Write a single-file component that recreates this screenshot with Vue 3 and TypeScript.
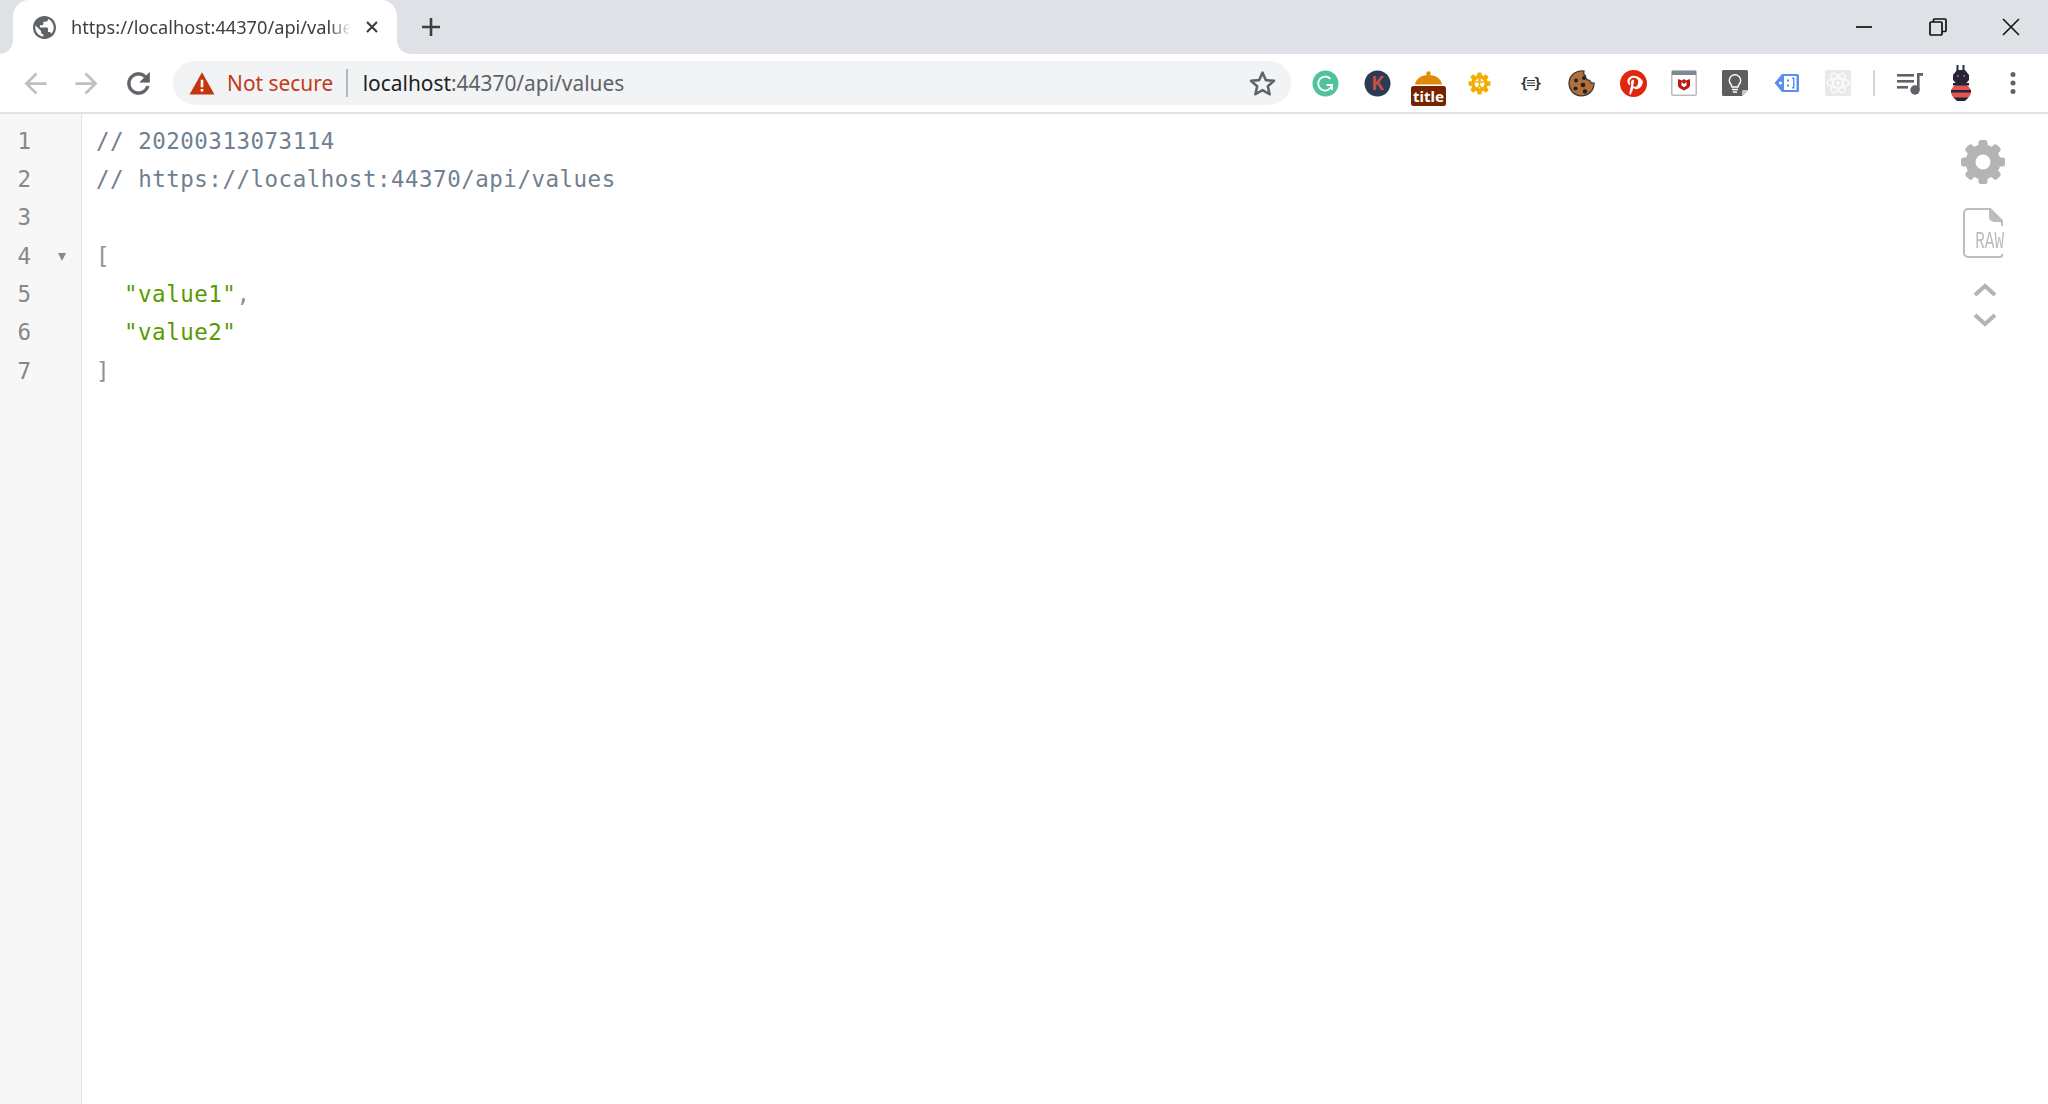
<script setup lang="ts">
const lines: { html: string; cls: string; indent?: boolean }[] = [
  { html: '// 20200313073114', cls: 'comment' },
  { html: '// https://localhost:44370/api/values', cls: 'comment' },
  { html: '', cls: '' },
  { html: '[', cls: 'punct' },
  { html: '"value1"', cls: 'str', indent: true },
  { html: '"value2"', cls: 'str', indent: true },
  { html: ']', cls: 'punct' },
]
const teeth = [0, 45, 90, 135, 180, 225, 270, 315]
</script>

<template>
  <div class="window">
    <header class="tabstrip">
      <div class="tab">
        <svg class="globe" viewBox="2 2 20 20" aria-hidden="true">
          <path fill="#5f6368" d="M12 2C6.48 2 2 6.48 2 12s4.48 10 10 10 10-4.48 10-10S17.52 2 12 2zm-1 17.93c-3.95-.49-7-3.85-7-7.93 0-.62.08-1.21.21-1.79L9 15v1c0 1.1.9 2 2 2v1.93zm6.9-2.54c-.26-.81-1-1.39-1.9-1.39h-1v-3c0-.55-.45-1-1-1H8v-2h2c.55 0 1-.45 1-1V7h2c1.1 0 2-.9 2-2v-.41c2.93 1.19 5 4.06 5 7.41 0 2.08-.8 3.97-2.1 5.39z" />
        </svg>
        <span class="tab-title">https://localhost:44370/api/value</span>
        <svg class="tab-close" viewBox="0 0 14 14" aria-hidden="true">
          <path d="M2 2l10 10M12 2L2 12" stroke="#3c4043" stroke-width="2.2" fill="none" />
        </svg>
      </div>
      <svg class="newtab" viewBox="0 0 20 20" aria-hidden="true">
        <path d="M10 1v18M1 10h18" stroke="#3c4043" stroke-width="2.6" fill="none" />
      </svg>
      <div class="winctl">
        <div class="winbtn">
          <svg width="18" height="18" viewBox="0 0 18 18"><path d="M1 9h16" stroke="#111" stroke-width="1.7" /></svg>
        </div>
        <div class="winbtn">
          <svg width="18" height="18" viewBox="0 0 18 18" fill="none" stroke="#111" stroke-width="1.7">
            <rect x="1" y="4" width="12" height="13" rx="1" />
            <path d="M4.5 4V2a1 1 0 0 1 1-1H16a1 1 0 0 1 1 1v10.5a1 1 0 0 1-1 1h-3" />
          </svg>
        </div>
        <div class="winbtn">
          <svg width="18" height="18" viewBox="0 0 18 18"><path d="M1 1l16 16M17 1L1 17" stroke="#111" stroke-width="1.6" fill="none" /></svg>
        </div>
      </div>
    </header>

    <nav class="toolbar">
      <div class="slot nav">
        <svg class="navicon" viewBox="0 0 24 24"><path fill="#bdc0c4" d="M20 11H7.83l5.59-5.59L12 4l-8 8 8 8 1.41-1.41L7.83 13H20v-2z" /></svg>
      </div>
      <div class="slot nav">
        <svg class="navicon flip" viewBox="0 0 24 24"><path fill="#bdc0c4" d="M20 11H7.83l5.59-5.59L12 4l-8 8 8 8 1.41-1.41L7.83 13H20v-2z" /></svg>
      </div>
      <div class="slot nav">
        <svg class="navicon reload" viewBox="0 0 24 24"><path fill="#5f6368" stroke="#5f6368" stroke-width=".5" d="M17.65 6.35C16.2 4.9 14.21 4 12 4c-4.42 0-7.99 3.58-7.99 8s3.57 8 7.99 8c3.73 0 6.84-2.55 7.73-6h-2.08c-.82 2.33-3.04 4-5.65 4-3.31 0-6-2.69-6-6s2.69-6 6-6c1.66 0 3.14.69 4.22 1.78L13 11h7V4l-2.35 2.35z" /></svg>
      </div>

      <div class="omnibox">
        <svg class="warn" viewBox="0 0 24 22" aria-hidden="true">
          <path d="M12 1L23.5 21.5H.5z" fill="#c5360f" />
          <path d="M10.8 8h2.4v7h-2.4zM10.8 16.5h2.4v2.4h-2.4z" fill="#fff" />
        </svg>
        <span class="insecure">Not secure</span>
        <span class="omni-sep"></span>
        <span class="url"><span class="host">localhost</span>:44370/api/values</span>
        <svg class="star" viewBox="0 0 24 24" aria-hidden="true">
          <path d="M12 3l2.7 6.2 6.8.6-5.1 4.5 1.5 6.6L12 17.5l-5.9 3.4 1.5-6.6-5.1-4.5 6.8-.6z" fill="none" stroke="#5f6368" stroke-width="2.1" stroke-linejoin="round" />
        </svg>
      </div>

      <div class="exts">
        <div class="slot">
          <svg width="27" height="27" viewBox="0 0 27 27">
            <circle cx="13.5" cy="13.5" r="13" fill="#4fc39a" />
            <path d="M18.5 9a7 7 0 1 0 1.5 6h-5.5M20 15v5" fill="none" stroke="#fff" stroke-width="1.8" />
          </svg>
        </div>
        <div class="slot">
          <svg width="27" height="27" viewBox="0 0 27 27">
            <circle cx="13.5" cy="13.5" r="13" fill="#2b3a55" />
            <text x="13.5" y="20" text-anchor="middle" class="k">K</text>
          </svg>
        </div>
        <div class="slot">
          <svg width="37" height="36" viewBox="0 0 37 36" class="title-ic">
            <circle cx="18.5" cy="2.5" r="2.2" fill="#e08a0b" />
            <path d="M5 13.5C6 7 12 4 18.5 4S31 7 32 13.5z" fill="#e08a0b" />
            <rect x="1" y="15" width="35" height="20" rx="2.5" fill="#772200" />
            <text x="18.5" y="30.5" text-anchor="middle" class="title-t">title</text>
          </svg>
        </div>
        <div class="slot">
          <svg width="23" height="23" viewBox="-12 -12 24 24">
            <rect v-for="a in teeth" :key="a" x="-2.3" y="-11.5" width="4.6" height="6" rx="1" fill="#f5ab00" :transform="`rotate(${a})`" />
            <circle r="7" fill="none" stroke="#f5ab00" stroke-width="3.6" />
            <circle cy="-3.6" r="1.5" fill="#f5ab00" />
            <path d="M-4.5-1.5L4.5-1.5M0-1.5V2L-2.4 5.5M0 2L2.4 5.5" stroke="#f5ab00" stroke-width="1.5" fill="none" />
          </svg>
        </div>
        <div class="slot">
          <svg width="22" height="16" viewBox="0 0 22 16">
            <text x="0" y="12.5" class="brace">{</text>
            <text x="22" y="12.5" text-anchor="end" class="brace">}</text>
            <path d="M7 5.5h8M7 8h8M7 10.500h8" stroke="#333" stroke-width="1.2" />
          </svg>
        </div>
        <div class="slot">
          <svg width="27" height="27" viewBox="0 0 27 27">
            <path d="M16 1.2A12.5 12.5 0 1 0 26 13c-2 .6-4-.6-4.2-2.6C19.500 10.600 17 8 17.500 5.500 16 5 15.500 3 16 1.200z" fill="#b06f3b" stroke="#3a3a3a" stroke-width="1.3" />
            <circle cx="16" cy="8" r="2" fill="#222" /><circle cx="8" cy="10.500" r="2" fill="#222" />
            <circle cx="15" cy="15" r="2.300" fill="#222" /><circle cx="7.500" cy="18.500" r="2" fill="#222" />
            <circle cx="17" cy="21.500" r="2.200" fill="#222" />
          </svg>
        </div>
        <div class="slot">
          <svg width="27" height="27" viewBox="0 0 24 24">
            <circle cx="12" cy="12" r="12" fill="#e0260f" />
            <path d="M12.500 5C8.800 5 6.600 7.400 6.600 10c0 1.400.8 2.900 2 3.300.5.200.6-.8.400-1.400-1.200-2 .3-5 3.300-5 2.500 0 3.900 1.500 3.900 3.500 0 2.600-1.200 4.600-2.900 4.600-1 0-1.700-.8-1.500-1.800.3-1.100.8-2.400.8-3.200 0-1.900-2.800-1.700-2.800 1 0 .8.300 1.400.3 1.400l-1.500 6.500c-.2 1 0 2.500 0 3 .1.300.4.300.6.100.4-.5 1.500-2.100 1.900-3.500l.7-2.800c.4.700 1.500 1.300 2.600 1.300 3.500 0 5.900-3.200 5.900-7.200C18.300 7.200 15.700 5 12.500 5z" fill="#fff" />
          </svg>
        </div>
        <div class="slot">
          <svg width="26" height="26" viewBox="0 0 26 26">
            <rect x=".75" y=".75" width="24.500" height="24.500" rx="1.500" fill="#fff" stroke="#b9bcbf" stroke-width="1.500" />
            <rect x="1" y="1" width="24" height="4" fill="#7d8a93" />
            <path d="M7 9l4 1.500 2-1.500 2 1.500 4-1.500v6.500c0 2-3 3.500-6 5-3-1.500-6-3-6-5z" fill="#c01818" />
            <path d="M10.500 12v3.500l2.500 1.800 2.500-1.800V12l-2.500 2z" fill="#fff" />
          </svg>
        </div>
        <div class="slot">
          <svg width="26" height="26" viewBox="0 0 26 26">
            <path d="M1.500 0h23A1.500 1.500 0 0 1 26 1.500V20l-6 6H1.500A1.500 1.500 0 0 1 0 24.500v-23A1.500 1.500 0 0 1 1.500 0z" fill="#5e5e5e" />
            <path d="M20 26v-4.500a1.500 1.500 0 0 1 1.500-1.500H26z" fill="#c9c9c9" />
            <path d="M10 17c0-2.500-2.700-3.200-2.700-6.500a5.700 5.700 0 0 1 11.400 0C18.700 13.800 16 14.500 16 17zM10 19.500h6M11 22h4" fill="none" stroke="#fff" stroke-width="1.400" />
          </svg>
        </div>
        <div class="slot">
          <svg width="26" height="20" viewBox="0 0 26 20" class="tag">
            <path d="M8 1h15.500A1.500 1.500 0 0 1 25 2.500v15a1.500 1.500 0 0 1-1.500 1.500H8L.5 10z" fill="#5c8df0" />
            <circle cx="6.500" cy="10" r="1.500" fill="#fff" />
            <rect x="10" y="3" width="12.500" height="14" fill="#fff" />
            <path d="M13 6.500h2v2h-2zM13 11.500h2v2h-2zM18 4.500h2.500v11H18v-1.500h1V6h-1z" fill="#5c8df0" />
          </svg>
        </div>
        <div class="slot">
          <svg width="26" height="26" viewBox="0 0 26 26">
            <rect width="26" height="26" rx="2" fill="#e9e9e9" />
            <g fill="none" stroke="#fafafa" stroke-width="1.500">
              <ellipse cx="13" cy="13" rx="11" ry="4.500" />
              <ellipse cx="13" cy="13" rx="11" ry="4.500" transform="rotate(60 13 13)" />
              <ellipse cx="13" cy="13" rx="11" ry="4.500" transform="rotate(120 13 13)" />
            </g>
            <circle cx="13" cy="13" r="2" fill="#fafafa" />
          </svg>
        </div>
      </div>
      <span class="tool-sep"></span>
      <div class="slot">
        <svg width="26" height="23" viewBox="0 0 26 23" fill="#5f6368">
          <rect x="0" y="2" width="17" height="2.600" />
          <rect x="0" y="8" width="17" height="2.600" />
          <rect x="0" y="14" width="11" height="2.600" />
          <rect x="20" y="2" width="2.600" height="16" />
          <rect x="20" y="1" width="6" height="2.800" />
          <circle cx="18" cy="18" r="4.700" />
        </svg>
      </div>
      <div class="slot">
        <svg width="22" height="36" viewBox="0 0 22 36">
          <path d="M7.500 0v7M13.500 0v7" stroke="#2a2b3a" stroke-width="2" />
          <path d="M7 5h8l4 5v5l-4 4.500H7L3 15v-5z" fill="#24243a" />
          <circle cx="8" cy="11" r="1" fill="#e25550" /><circle cx="14" cy="11" r="1" fill="#e25550" />
          <ellipse cx="11" cy="27" rx="10" ry="8.500" fill="#e25550" />
          <rect x="1" y="25" width="20" height="2.500" fill="#24243a" />
          <path d="M3.500 32.500h15L15 36H7z" fill="#24243a" />
          <rect x="3" y="18" width="16" height="2.500" fill="#24243a" />
        </svg>
      </div>
      <div class="slot dots">
        <svg width="6" height="24" viewBox="0 0 6 24" fill="#5f6368">
          <circle cx="3" cy="3.500" r="2.500" /><circle cx="3" cy="12" r="2.500" /><circle cx="3" cy="20.500" r="2.500" />
        </svg>
      </div>
    </nav>

    <main class="editor">
      <div class="gutter">
        <div v-for="(l, i) in lines" :key="i" class="num">
          <span class="n">{{ i + 1 }}</span>
          <span v-if="i === 3" class="fold"></span>
        </div>
      </div>
      <div class="code">
        <div v-for="(l, i) in lines" :key="i" class="line" :class="{ indented: l.indent }">
          <span :class="l.cls">{{ l.html }}</span><span v-if="i === 4" class="punct">,</span>
        </div>
      </div>

      <aside class="tools">
        <svg class="t-gear" width="44" height="44" viewBox="-22 -22 44 44">
          <rect v-for="a in teeth" :key="a" x="-4.500" y="-22" width="9" height="11" rx="2.500" fill="#b4b4b4" :transform="`rotate(${a})`" />
          <circle r="12.500" fill="none" stroke="#b4b4b4" stroke-width="10" />
        </svg>
        <div class="t-raw">
          <svg width="40" height="50" viewBox="0 0 40 50" fill="none" stroke="#bdbdbd" stroke-width="2">
            <path d="M39 18V13L27 1H5a4 4 0 0 0-4 4v40a4 4 0 0 0 4 4h32a2 2 0 0 0 2-2v-2" />
            <path d="M27 1v8a4 4 0 0 0 4 4h8z" fill="#bdbdbd" />
          </svg>
          <span class="raw-text">RAW</span>
        </div>
        <svg class="t-chev" width="24" height="14" viewBox="0 0 24 14"><path d="M2 12L12 3l10 9" fill="none" stroke="#b4b4b4" stroke-width="4" /></svg>
        <svg class="t-chev2" width="24" height="14" viewBox="0 0 24 14"><path d="M2 2l10 9 10-9" fill="none" stroke="#b4b4b4" stroke-width="4" /></svg>
      </aside>
    </main>
  </div>
</template>

<style>
html, body { margin: 0; padding: 0; background: #fff; overflow: hidden; }
</style>

<style scoped>
.window {
  width: 2048px;
  height: 1104px;
  display: flex;
  flex-direction: column;
  font-family: "Noto Sans", Roboto, sans-serif;
  background: #fff;
}
.tabstrip {
  height: 54px;
  flex: none;
  display: flex;
  align-items: center;
  background: #dee1e6;
  padding-left: 13px;
  box-sizing: border-box;
}
.tab {
  position: relative;
  width: 384px;
  height: 54px;
  background: #fff;
  border-radius: 16px 16px 0 0;
  display: flex;
  align-items: center;
  padding-left: 20px;
  box-sizing: border-box;
}
.tab::before,
.tab::after {
  content: "";
  position: absolute;
  bottom: 0;
  width: 13px;
  height: 13px;
}
.tab::before {
  left: -13px;
  background: radial-gradient(circle at 0 0, #dee1e6 12.5px, #fff 13px);
}
.tab::after {
  right: -13px;
  background: radial-gradient(circle at 100% 0, #dee1e6 12.5px, #fff 13px);
}
.globe { width: 23px; height: 23px; flex: none; }
.tab-title {
  margin-left: 15px;
  width: 280px;
  flex: none;
  white-space: nowrap;
  font-size: 18.2px;
  color: #3c4043;
  -webkit-mask-image: linear-gradient(to right, #000 258px, transparent 280px);
  mask-image: linear-gradient(to right, #000 258px, transparent 280px);
}
.tab-close { width: 14px; height: 14px; margin-left: 14px; flex: none; }
.newtab { width: 20px; height: 20px; margin-left: 24px; flex: none; }
.winctl { margin-left: auto; display: flex; }
.winbtn {
  width: 73.5px;
  height: 46px;
  display: flex;
  align-items: center;
  justify-content: center;
}
.toolbar {
  height: 60px;
  flex: none;
  display: flex;
  align-items: center;
  background: #fff;
  border-bottom: 2px solid #e3e3e3;
  padding-left: 9.500px;
  box-sizing: border-box;
}
.slot {
  width: 51.200px;
  height: 46px;
  flex: none;
  display: flex;
  align-items: center;
  justify-content: center;
}
.slot.nav { width: 51.500px; }
.slot.dots { margin-left: 1px; }
.navicon { width: 33px; height: 33px; }
.flip { transform: scaleX(-1); }
.omnibox {
  margin-left: 9px;
  width: 1118px;
  height: 44px;
  flex: none;
  display: flex;
  align-items: center;
  background: #f1f3f4;
  border-radius: 22px;
  padding-left: 16px;
  box-sizing: border-box;
  font-size: 20.9px;
  white-space: nowrap;
}
.warn { width: 26px; height: 24px; flex: none; }
.insecure { margin-left: 12px; color: #c5391a; }
.omni-sep { width: 1.500px; height: 28px; background: #b5b8bb; margin: 0 15px 0 13px; }
.url { color: #5f6368; }
.host { color: #202124; }
.star { width: 29px; height: 29px; margin-left: auto; margin-right: 14px; flex: none; }
.exts { margin-left: 9.400px; display: flex; }
.tool-sep { width: 2px; height: 26px; background: #d5d6d8; margin: 0 9.500px; flex: none; }
.title-ic { margin-top: 11px; }
.k { font: 700 19px "Noto Sans", sans-serif; fill: #c0513f; }
.title-t { font: 700 15px "Noto Sans", sans-serif; fill: #fff; }
.brace { font: 700 14px "DejaVu Sans Mono", monospace; fill: #333; }
.editor {
  position: relative;
  flex: 1;
  min-height: 0;
  display: flex;
  font-family: "DejaVu Sans Mono", monospace;
  font-size: 22.5px;
  line-height: 38.400px;
  letter-spacing: 0.500px;
}
.gutter {
  width: 82px;
  flex: none;
  box-sizing: border-box;
  padding-top: 7.500px;
  background: #f7f7f7;
  border-right: 1.500px solid #e5e5e5;
  color: #888;
}
.num { height: 38.400px; position: relative; }
.n { display: block; width: 49px; text-align: center; }
.fold {
  position: absolute;
  left: 58px;
  top: 16px;
  border-left: 4.500px solid transparent;
  border-right: 4.500px solid transparent;
  border-top: 8px solid #888;
}
.code { flex: 1; padding: 7.500px 0 0 14px; white-space: pre; }
.line { height: 38.400px; }
.indented { padding-left: 28px; }
.comment { color: #708090; }
.str { color: #5a9a00; }
.punct { color: #909090; }
.tools {
  position: absolute;
  top: 26px;
  left: 1960px;
  width: 46px;
  display: flex;
  flex-direction: column;
  align-items: center;
  letter-spacing: 0;
}
.t-raw { position: relative; margin-top: 24px; width: 40px; height: 50px; }
.raw-text {
  position: absolute;
  right: -1px;
  bottom: 7px;
  font: 400 16px/1 "Liberation Mono", monospace;
  color: #bdbdbd;
  background: #fff;
  padding-left: 2px;
  transform: scaleY(1.45);
  transform-origin: 50% 60%;
}
.t-chev { margin-top: 25px; margin-left: 3px; }
.t-chev2 { margin-top: 16px; margin-left: 3px; }
</style>
